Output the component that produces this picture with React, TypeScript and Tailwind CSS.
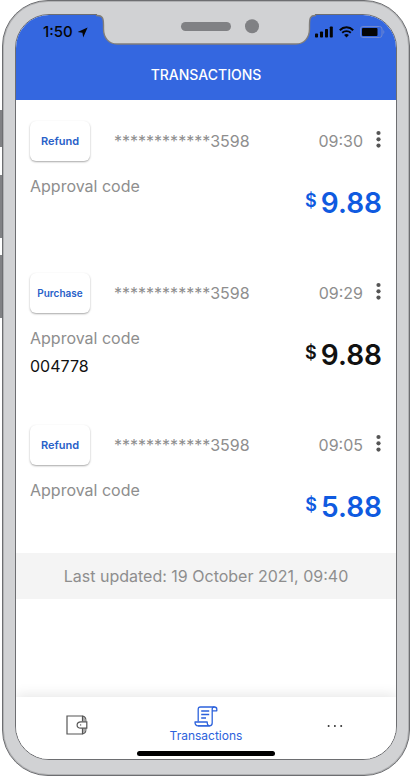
interface Transaction {
  id: number;
  type: "Refund" | "Purchase";
  card: string;
  time: string;
  approvalCode?: string;
  amount: string;
}

const transactions: Transaction[] = [
  { id: 1, type: "Refund", card: "************3598", time: "09:30", amount: "9.88" },
  { id: 2, type: "Purchase", card: "************3598", time: "09:29", approvalCode: "004778", amount: "9.88" },
  { id: 3, type: "Refund", card: "************3598", time: "09:05", amount: "5.88" },
];

const LocationIcon = () => (
  <svg width="11" height="11" viewBox="0 0 11 11" aria-hidden="true">
    <path d="M10.6 0.4 L6.2 10.4 L5.4 5.8 L0.6 5 Z" fill="#050505" />
  </svg>
);

const SignalIcon = () => (
  <svg width="18" height="12" viewBox="0 0 18 12" fill="#050505" aria-hidden="true">
    <rect x="0" y="7.5" width="3" height="4" rx="0.8" />
    <rect x="5" y="5.5" width="3" height="6" rx="0.8" />
    <rect x="10" y="3" width="3" height="8.5" rx="0.8" />
    <rect x="14.8" y="0.5" width="3" height="11" rx="0.8" />
  </svg>
);

const WifiIcon = () => (
  <svg width="15" height="12" viewBox="0 0 15 12" fill="none" stroke="#050505" aria-hidden="true">
    <path d="M0.8 4.2 C4.6 0.4 10.4 0.4 14.2 4.2" strokeWidth="2" />
    <path d="M3.2 6.8 C5.6 4.5 9.4 4.5 11.8 6.8" strokeWidth="1.9" />
    <path d="M5.1 8.9 C6.5 7.7 8.5 7.7 9.9 8.9 L7.5 11.4 Z" fill="#050505" stroke="none" />
  </svg>
);

const BatteryIcon = () => (
  <svg width="25" height="12" viewBox="0 0 25 12" aria-hidden="true">
    <rect x="0.5" y="0.5" width="21.5" height="11" rx="2.5" fill="none" stroke="#6f87cf" />
    <rect x="2" y="2" width="15.5" height="8" rx="1" fill="#050505" />
    <path d="M23.4 4 C24.6 4.6 24.6 7.4 23.4 8 Z" fill="#6f87cf" />
  </svg>
);

const WalletIcon = () => (
  <svg width="22" height="20" viewBox="0 0 22 20" fill="none" stroke="#555" strokeWidth="1.2" aria-hidden="true">
    <path d="M16.5 6.5 V1 H1 V19 H16.5 V13" />
    <path d="M16.5 1.2 C18.6 1.6 19.8 3 19.8 5 V6.5 M16.5 18.8 C18.6 18.4 19.8 17 19.8 15 V13" />
    <path d="M17 1.5 L19.6 4 V6.5 H17 Z M17 13 H19.6 V16 L17 18.5 Z" fill="#aaa" stroke="none" />
    <path d="M20.8 6.8 H15 C9.8 6.8 9.8 13.2 15 13.2 H20.8 Z" fill="#fff" />
    <circle cx="14.6" cy="9.9" r="0.7" fill="#555" stroke="none" />
  </svg>
);

const ReceiptIcon = () => (
  <svg width="24" height="21" viewBox="0 0 24 21" fill="none" stroke="#2c62dc" strokeWidth="1.3" strokeLinejoin="round" aria-hidden="true">
    <path d="M4.2 15.5 V3.5 C4.2 1.8 5 1 6.5 1 H20.5" />
    <path d="M18.2 4.8 V3 C18.2 1.8 19 1 20.4 1 C22 1 22.8 1.9 22.8 3.2 V4.8 H18.2 V17 C18.2 18.8 17.2 19.8 15.6 19.8 H4" />
    <path d="M13.2 16 H1 C1 18.4 2 19.8 4 19.8 H15.6 C14 19.8 13.2 18.6 13.2 16 Z" />
    <path d="M7.2 5 H15.2 M7.2 8.5 H15.2 M7.2 12 H12" />
  </svg>
);

// Camera housing that hangs from the top of the phone frame
const Notch = () => (
  <svg
    className="absolute top-0 left-1/2 -translate-x-1/2"
    width="220"
    height="46"
    viewBox="0 0 220 46"
    aria-hidden="true"
  >
    <path
      d="M1 14.5 C6.5 14.5 7.5 17 7.5 24 V28 C7.5 37 13 43 21 43 H200 C208 43 213.5 37 213.5 28 V24 C213.5 17 214.5 14.5 219 14.5 V12 H1 Z"
      fill="#d1d2d4"
    />
    <path
      d="M0 14.5 H1 C6.5 14.5 7.5 17 7.5 24 V28 C7.5 37 13 43 21 43 H200 C208 43 213.5 37 213.5 28 V24 C213.5 17 214.5 14.5 219 14.5 H220"
      fill="none"
      stroke="#807e7b"
      strokeWidth="1.4"
    />
    <rect x="85" y="21" width="50" height="9" rx="4.5" fill="#808184" />
    <circle cx="156" cy="25.3" r="7" fill="#808184" />
  </svg>
);

const TransactionItem = ({ type, card, time, approvalCode, amount }: Transaction) => (
  <article>
    <div className="flex items-center">
      <button
        type="button"
        className={
          type === "Refund"
            ? "h-10 w-[60px] rounded-md bg-white text-[11px] font-semibold text-[#2860c8] shadow-[0_1px_2px_rgba(0,0,0,0.35)]"
            : "h-10 w-[60px] rounded-md bg-white text-[10px] font-semibold text-[#2860c8] shadow-[0_1px_2px_rgba(0,0,0,0.35)]"
        }
      >
        {type}
      </button>
      <span className="ml-6 text-base text-[#8e8e8e]">{card}</span>
      <time className="ml-auto text-base text-[#8e8e8e]">{time}</time>
      <button type="button" aria-label="More options" className="ml-3 pb-1">
        <svg width="7" height="18" viewBox="0 0 7 18" fill="#555">
          <circle cx="3.5" cy="3" r="2.1" />
          <circle cx="3.5" cy="9.3" r="2.1" />
          <circle cx="3.5" cy="15.6" r="2.1" />
        </svg>
      </button>
    </div>

    <div className="mt-[11px] flex min-h-[57px] justify-between">
      <div className="text-base leading-7">
        <p className="text-[#8e8e8e]">Approval code</p>
        {approvalCode && <p className="text-[#111]">{approvalCode}</p>}
      </div>
      <p
        className={
          type === "Refund"
            ? "flex items-start gap-1 pt-[15px] font-semibold text-[#0f5ae0]"
            : "flex items-start gap-1 pt-[15px] font-semibold text-[#111]"
        }
      >
        <span className="text-lg leading-7">$</span>
        <span className="text-[28px] leading-8">{amount}</span>
      </p>
    </div>
  </article>
);

export default function App() {
  return (
    <div className="relative flex min-h-screen bg-white pr-px pl-[2px] font-['Inter',sans-serif]">
      {/* Side buttons */}
      <div className="absolute top-[110px] left-0 flex w-[3px] flex-col">
        <span className="h-[37px] bg-[#808184]" />
        <span className="mt-7 h-[63px] bg-[#808184]" />
        <span className="mt-[17px] h-[63px] bg-[#808184]" />
      </div>

      <div className="relative flex w-full flex-col rounded-[46px] border border-[#6d6e71] bg-[#d1d2d4] px-3 pt-[13px] pb-[15px] shadow-[inset_0_0_0_1px_#b0b1b3]">
        <div className="relative flex grow flex-col overflow-hidden rounded-[34px] border border-[#6d6e71] bg-white">
          <header className="bg-[#3467e0]">
            <div className="flex h-[34px] items-center justify-between pr-[11px] pl-[27px]">
              <div className="flex items-center gap-1 text-[15px] font-medium text-[#050505]">
                <span>1:50</span>
                <LocationIcon />
              </div>
              <div className="flex items-center gap-[6px]">
                <SignalIcon />
                <WifiIcon />
                <BatteryIcon />
              </div>
            </div>
            <h1 className="flex h-[51px] items-center justify-center text-sm font-medium text-white">
              TRANSACTIONS
            </h1>
          </header>

          <main className="grow">
            <section className="flex flex-col gap-11 pt-[21px] pr-[14px] pb-5 pl-[14px]">
              {transactions.map((t) => (
                <TransactionItem key={t.id} {...t} />
              ))}
            </section>
            <p className="bg-[#f4f4f4] text-center text-base leading-[46px] text-[#8e8e8e]">
              Last updated: 19 October 2021, 09:40
            </p>
          </main>

          <nav className="flex h-[62px] justify-between bg-white px-[50px] shadow-[0_-2px_12px_rgba(0,0,0,0.1)]">
            <a href="#wallet" aria-label="Wallet" className="flex w-[22px] justify-center pt-[18px]">
              <WalletIcon />
            </a>
            <a
              href="#transactions"
              className="flex flex-col items-center gap-px pt-[9px] text-xs leading-4 text-[#2c62dc]"
            >
              <ReceiptIcon />
              Transactions
            </a>
            <a href="#more" aria-label="More" className="flex w-[22px] justify-center pt-[27px]">
              <svg width="16" height="4" viewBox="0 0 16 4" fill="#333">
                <circle cx="1.6" cy="2" r="1" />
                <circle cx="7.9" cy="2" r="1" />
                <circle cx="14.2" cy="2" r="1" />
              </svg>
            </a>
          </nav>

          {/* Home indicator */}
          <span className="absolute bottom-[3px] left-1/2 h-[5px] w-[138px] -translate-x-1/2 rounded-full bg-black" />
        </div>

        <Notch />
      </div>
    </div>
  );
}
